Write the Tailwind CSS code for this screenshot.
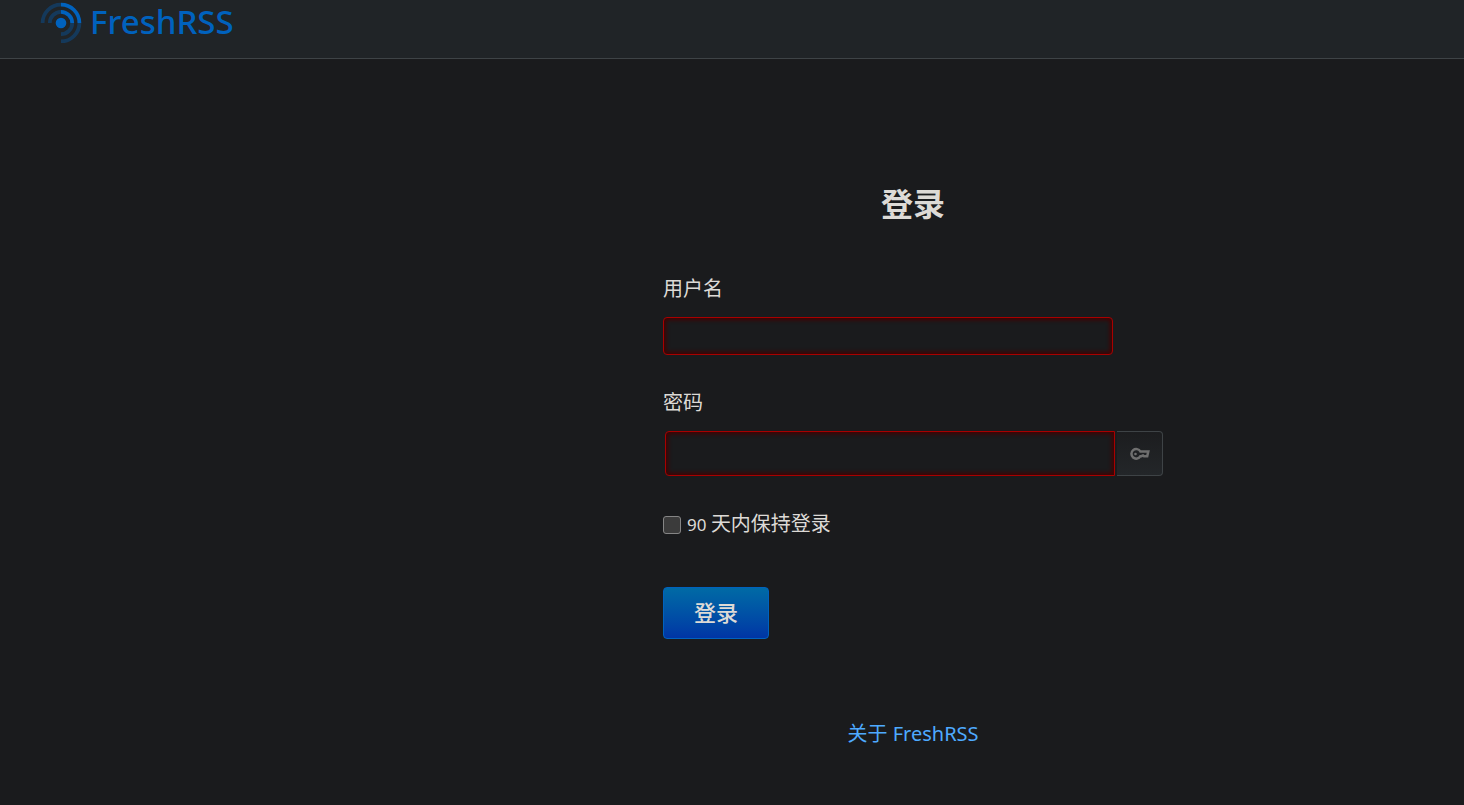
<!DOCTYPE html>
<html lang="zh-CN">
<head>
<meta charset="utf-8">
<title>登录 · FreshRSS</title>
<script src="https://cdn.jsdelivr.net/npm/@tailwindcss/browser@4"></script>
</head>
<body class="flex min-h-screen flex-col bg-[#1a1b1d] font-['Noto_Sans','Noto_Sans_CJK_SC',sans-serif] text-xl text-[#dddad6]">
<header class="flex h-[59px] items-start border-b border-[#3e4346] bg-[#202427] px-10">
  <a href="#" class="flex items-center gap-2 pt-px text-[#0062be]">
    <svg class="size-[42px]" viewBox="0 0 42 42" fill="none" stroke="currentColor" stroke-width="3.8" aria-hidden="true">
      <circle cx="21" cy="22" r="5.3" fill="currentColor" stroke="none"/>
      <g stroke-opacity=".35">
        <path d="M2.6 22A18.4 18.4 0 0 1 21 3.6M21 40.4A18.4 18.4 0 0 0 39.4 22"/>
        <path d="M9.8 22A11.2 11.2 0 0 1 21 10.8M21 33.2A11.2 11.2 0 0 0 32.2 22"/>
      </g>
      <path d="M21 3.6A18.4 18.4 0 0 1 39.4 22M21 10.8A11.2 11.2 0 0 1 32.2 22"/>
    </svg>
    <span class="font-['Noto_Sans',sans-serif] text-[33px] leading-[42px] font-medium">FreshRSS</span>
  </a>
</header>
<div class="grid flex-1 grid-cols-[663fr_801fr]">
  <main class="col-start-2 w-[500px] pt-[121px]">
    <h1 class="text-center text-[32px] leading-12 font-bold">登录</h1>
    <form class="pt-[45px]">
      <label for="user" class="block leading-8">用户名</label>
      <input id="user" type="text" required class="mt-3 block h-[38px] w-[450px] rounded-[4px] border border-[#a90000] px-2 shadow-[inset_0_0_4px_2px_#440000] outline-none">
      <label for="pass" class="mt-8 block leading-8">密码</label>
      <div class="mt-3 flex h-[45px] gap-0.5 pl-0.5">
        <input id="pass" type="password" required class="w-[450px] rounded-l-[4px] border border-[#a90000] px-2 shadow-[inset_0_0_4px_2px_#440000] outline-none">
        <button type="button" aria-label="显示密码" class="flex flex-1 items-center justify-center rounded-r-[4px] border border-l-0 border-[#3e4346] bg-linear-to-b from-[#1c1d1f] to-[#232629] text-[#6f6f6f]">
          <svg class="h-3.5 w-5" viewBox="0 0 20 14" fill="none" stroke="currentColor" stroke-width="2.5" aria-hidden="true">
            <path d="M10.4 4.5H18.3L17.2 9.2H14L13 8.4L11.5 9.2H10.4A4.8 4.8 0 1 1 10.4 4.5Z"/>
            <circle cx="5.5" cy="7" r="1.3" fill="currentColor" stroke="none"/>
          </svg>
        </button>
      </div>
      <label class="mt-8 flex items-center gap-1.5 leading-8">
        <input type="checkbox" class="size-[18px] appearance-none rounded-[3px] border border-[#858585] bg-[#3b3b3b]">
        <span><span class="text-[17px]">90 </span>天内保持登录</span>
      </label>
      <button type="submit" class="mt-[46px] block h-[52px] w-[106px] rounded-[4px] border border-[#0062be] bg-linear-to-b from-[#006aa5] to-[#0035a5] pb-0.5 text-[22px] font-medium">登录</button>
    </form>
    <p class="mt-[79px] text-center leading-8"><a href="#" class="text-[#4eaaff]">关于 FreshRSS</a></p>
  </main>
</div>
</body>
</html>
